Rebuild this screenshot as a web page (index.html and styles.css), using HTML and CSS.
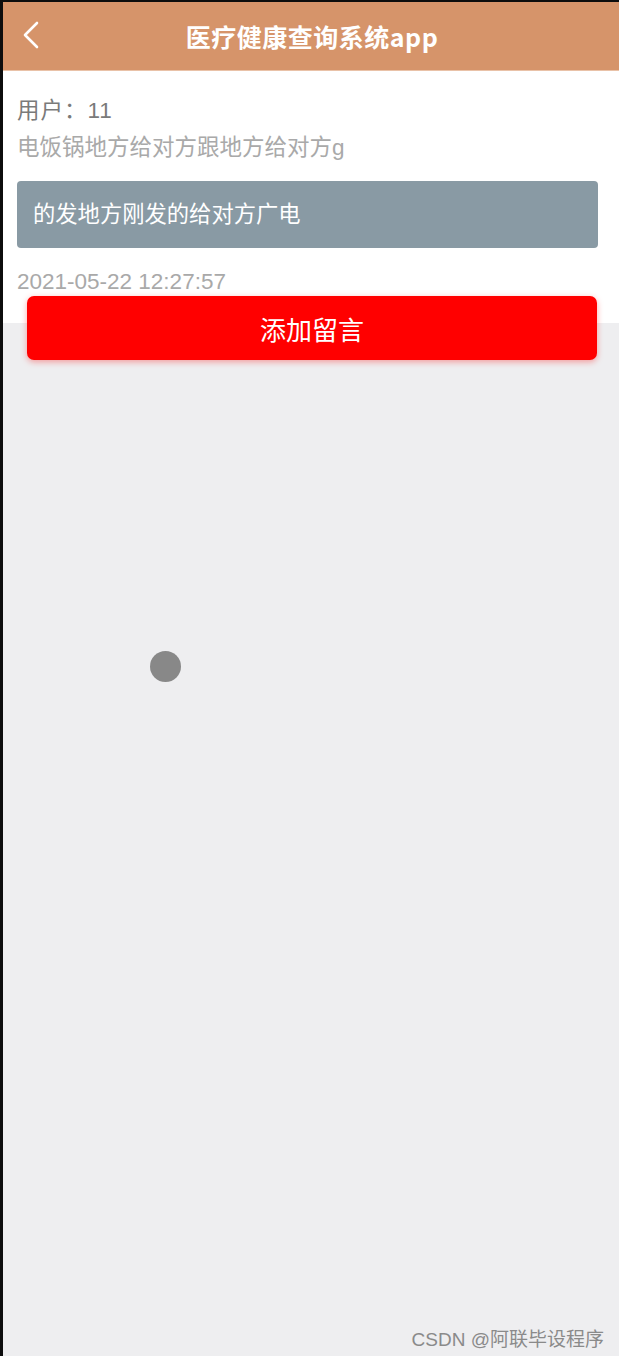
FILE: index.html
```html
<!DOCTYPE html>
<html lang="zh-CN">
<head>
<meta charset="utf-8">
<title>医疗健康查询系统app</title>
<link rel="stylesheet" href="styles.css">
</head>
<body>
<div class="frame">
  <div class="app">
    <header class="topbar">
      <svg class="back" width="22" height="30" viewBox="0 0 22 30"><path d="M17 3 L5 15 L17 27" fill="none" stroke="#fff" stroke-width="2.6" stroke-linecap="round" stroke-linejoin="round"/></svg>
      <h1 class="title">医疗健康查询系统app</h1>
    </header>
    <section class="card">
      <div class="user">用户：11</div>
      <div class="subject">电饭锅地方给对方跟地方给对方g</div>
      <div class="reply">的发地方刚发的给对方广电</div>
      <div class="time">2021-05-22 12:27:57</div>
    </section>
    <button class="add">添加留言</button>
    <div class="rest">
      <span class="dot"></span>
      <div class="watermark">CSDN @阿联毕设程序</div>
    </div>
  </div>
</div>
</body>
</html>
```

FILE: styles.css
```css
html, body {
  margin: 0;
  padding: 0;
  background: #0d0d0d;
}
body {
  font-family: "Liberation Sans", "Noto Sans CJK SC", sans-serif;
}
.frame {
  padding: 2px 0 0 3px;
  height: 1354px;
}
.app {
  height: 1354px;
  background: #eeeef0;
  display: flex;
  flex-direction: column;
}
.topbar {
  height: 68px;
  background: #d6946a;
  border-bottom: 1px solid #e9c2a8;
  display: flex;
  align-items: center;
  justify-content: center;
  position: relative;
}
.back {
  position: absolute;
  left: 17px;
  top: 18px;
}
.title {
  margin: 0;
  color: #fff;
  font-size: 25px;
  font-weight: bold;
  font-family: "Noto Sans CJK SC", "Liberation Sans", sans-serif;
  letter-spacing: 0.5px;
  line-height: 68px;
  margin-left: 2px;
}
.card {
  background: #fff;
  padding: 25px 21px 26px 14px;
  display: flex;
  flex-direction: column;
}
.user {
  font-size: 22.5px;
  line-height: 30px;
  color: #7a7a7a;
  letter-spacing: 1px;
}
.subject {
  margin-top: 7px;
  font-size: 22.5px;
  line-height: 30px;
  color: #a9a9a9;
}
.reply {
  margin-top: 18px;
  height: 67px;
  line-height: 67px;
  background: #899aa4;
  border-radius: 4px;
  padding: 0 16px;
  color: #fff;
  font-size: 22.3px;
}
.time {
  margin-top: 19px;
  font-size: 22.5px;
  line-height: 30px;
  color: #a9a9a9;
}
.add {
  margin: -27px 22px 0 24px;
  height: 64px;
  border: none;
  border-radius: 7px;
  background: #ff0000;
  color: #fff;
  font-size: 26px;
  font-family: "Noto Sans CJK SC", "Liberation Sans", sans-serif;
  box-shadow: 0 2px 6px rgba(255, 0, 0, 0.35);
  position: relative;
}
.rest {
  flex: 1;
  position: relative;
}
.dot {
  position: absolute;
  left: 147px;
  top: 291px;
  width: 31px;
  height: 31px;
  border-radius: 50%;
  background: #888888;
}
.watermark {
  position: absolute;
  right: 15px;
  bottom: 5px;
  font-size: 19px;
  color: #8a8a8a;
  font-family: "Liberation Sans", "Noto Sans CJK SC", sans-serif;
}
```
